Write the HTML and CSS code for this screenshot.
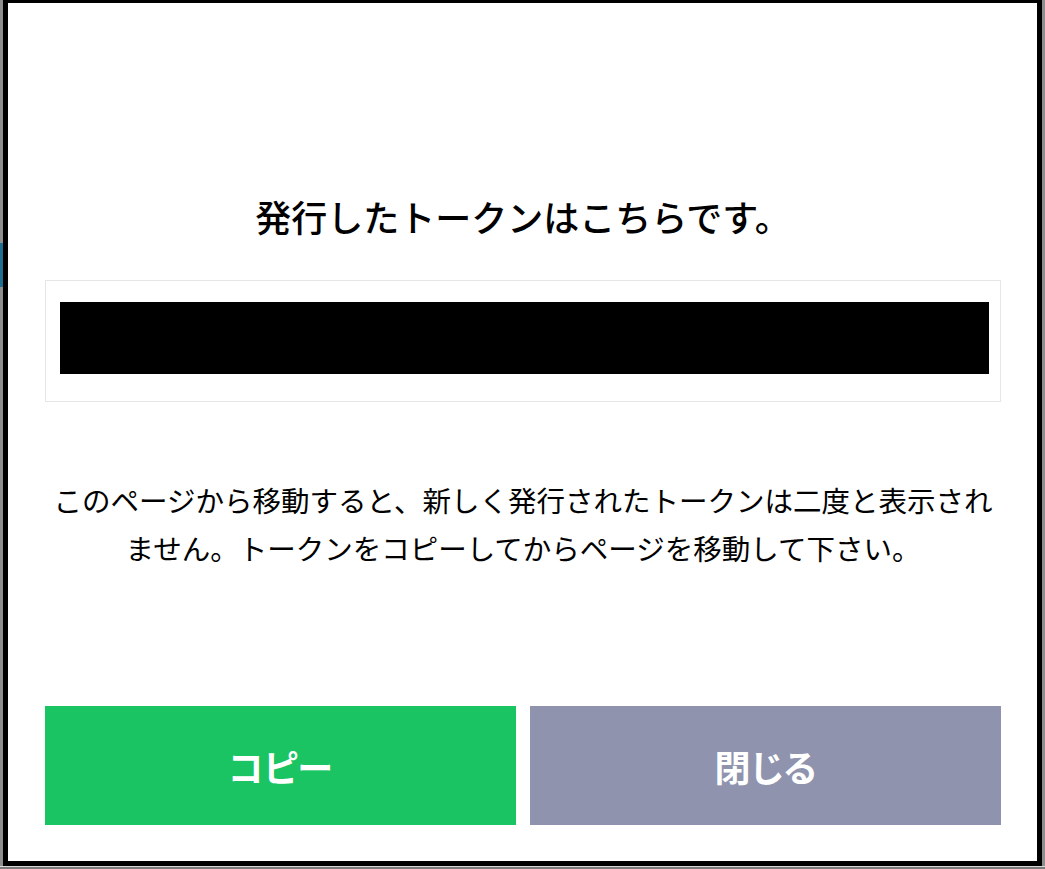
FILE: index.html
```html
<!DOCTYPE html>
<html lang="ja">
<head>
<meta charset="utf-8">
<title>トークン発行</title>
<link rel="stylesheet" href="styles.css">
</head>
<body>
<div class="screen">
  <div class="gutter gutter-left"><div class="gutter-mark"></div></div>
  <div class="modal">
    <h1 class="modal-title">発行したトークンはこちらです。</h1>
    <div class="token-box"><div class="token-redacted"></div></div>
    <p class="modal-note">このページから移動すると、新しく発行されたトークンは二度と表示され<br>ません。トークンをコピーしてからページを移動して下さい。</p>
    <div class="actions">
      <button class="btn btn-copy">コピー</button>
      <button class="btn btn-close">閉じる</button>
    </div>
  </div>
  <div class="gutter gutter-right"></div>
</div>
<div class="bottom-strip"></div>
</body>
</html>
```

FILE: styles.css
```css
* { box-sizing: border-box; }
html, body { margin: 0; padding: 0; }
body {
  width: 1045px;
  height: 869px;
  overflow: hidden;
  background: #8c8c8c;
  font-family: "Noto Sans CJK JP", "Noto Sans", sans-serif;
  color: #000;
}
.screen {
  display: flex;
  height: 866px;
}
.gutter {
  width: 3px;
  flex: none;
  background: #8e8e8e;
}
.gutter-mark {
  margin-top: 243px;
  height: 44px;
  background: #1f6f8f;
}
.modal {
  width: 1039px;
  flex: none;
  background: #fff;
  border: 5px solid #000;
  border-top-width: 3px;
  display: flex;
  flex-direction: column;
  align-items: stretch;
  padding: 0 36px 36px 37px;
}
.modal-title {
  margin: 191px 0 0;
  font-size: 36px;
  line-height: 44px;
  font-weight: 500;
  text-align: center;
}
.token-box {
  margin-top: 42px;
  height: 122px;
  border: 1px solid #e6e6e6;
  padding: 21px 11px 27px 14px;
}
.token-redacted {
  height: 72px;
  background: #000;
}
.modal-note {
  margin: 74px 0 0;
  font-size: 28.5px;
  line-height: 48px;
  text-align: center;
  color: #000;
  white-space: nowrap;
}
.actions {
  margin-top: auto;
  display: flex;
  gap: 14px;
}
.btn {
  flex: 1;
  height: 119px;
  border: 0;
  color: #fff;
  font-family: inherit;
  font-size: 36px;
  font-weight: 700;
  padding: 0;
  font-feature-settings: "palt";
}
.btn-copy { background: #1ac463; }
.btn-close { background: #9093ae; }
.bottom-strip {
  height: 3px;
  background: linear-gradient(#d8d8d8 0 1px, #7a7a7a 1px);
}
```
